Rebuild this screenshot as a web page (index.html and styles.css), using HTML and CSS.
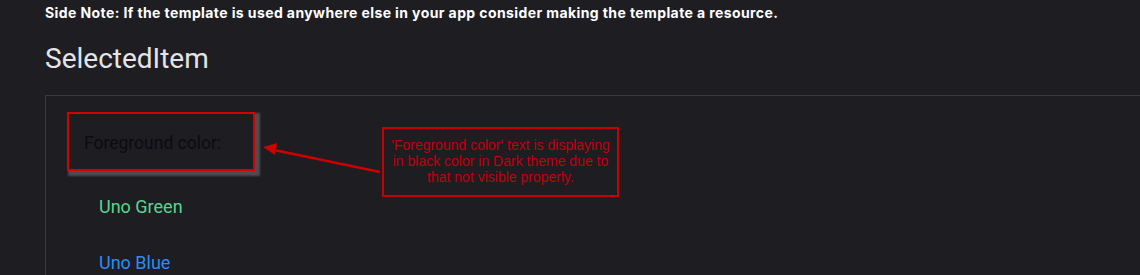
FILE: index.html
```html
<!DOCTYPE html>
<html>
<head>
<meta charset="utf-8">
<link rel="stylesheet" href="styles.css">
</head>
<body>
<div class="page">
  <p class="note">Side Note: If the template is used anywhere else in your app consider making the template a resource.</p>
  <h2 class="title">SelectedItem</h2>
  <div class="card">
    <div class="label-box"><span class="label">Foreground color:</span></div>
    <ul class="items">
      <li class="item green">Uno Green</li>
      <li class="item blue">Uno Blue</li>
    </ul>
  </div>
  <svg class="arrow" width="1140" height="275" viewBox="0 0 1140 275">
    <line x1="380" y1="172" x2="274" y2="150" stroke="#cc0000" stroke-width="2.5"/>
    <polygon points="263,147 277,143 275,155" fill="#cc0000"/>
  </svg>
  <div class="callout">'Foreground color' text is displaying in black color in Dark theme due to that not visible properly.</div>
</div>
</body>
</html>
```
FILE: styles.css
```css
html, body {
  margin: 0;
  padding: 0;
  background: #1e1d22;
  overflow: hidden;
}
.page {
  position: relative;
  width: 1140px;
  height: 275px;
  padding-left: 45px;
  box-sizing: border-box;
  overflow: hidden;
}
.note {
  margin: 0;
  padding-top: 4px;
  font-family: "Inter", "DejaVu Sans", sans-serif;
  font-weight: 700;
  font-size: 14px;
  line-height: 18px;
  color: #ffffff;
  letter-spacing: 0.4px;
  white-space: nowrap;
}
.title {
  margin: 20px 0 0 0;
  font-family: "Roboto", sans-serif;
  font-weight: 400;
  font-size: 28px;
  line-height: 34px;
  color: #e4e4e8;
}
.card {
  margin-top: 19px;
  width: 1200px;
  height: 300px;
  border: 1px solid #3a393f;
  box-sizing: border-box;
  padding: 16px 0 0 21px;
}
.label-box {
  width: 188px;
  height: 59px;
  border: 2px solid #d40000;
  box-sizing: border-box;
  box-shadow: 3px 3px 2px 2px #4d4d4f;
  display: flex;
  align-items: center;
  padding-left: 15px;
}
.label {
  font-family: "Roboto", sans-serif;
  font-size: 17.5px;
  color: #0c0c0e;
  margin-top: 2px;
}
.items {
  list-style: none;
  margin: 0;
  padding: 0 0 0 32px;
}
.item {
  font-family: "Roboto", sans-serif;
  font-size: 18px;
  line-height: 56px;
}
.item:first-child {
  margin-top: 8px;
}
.green { color: #5ad68c; }
.blue { color: #2e8cf5; }
.arrow {
  position: absolute;
  left: 0;
  top: 0;
}
.callout {
  position: absolute;
  left: 382px;
  top: 127px;
  width: 237px;
  height: 70px;
  box-sizing: border-box;
  border: 2px solid #c80000;
  padding: 8px 4px 0 4px;
  font-family: "Liberation Sans", Arial, sans-serif;
  font-size: 14px;
  line-height: 16px;
  text-align: center;
  color: #c0000c;
}
```
